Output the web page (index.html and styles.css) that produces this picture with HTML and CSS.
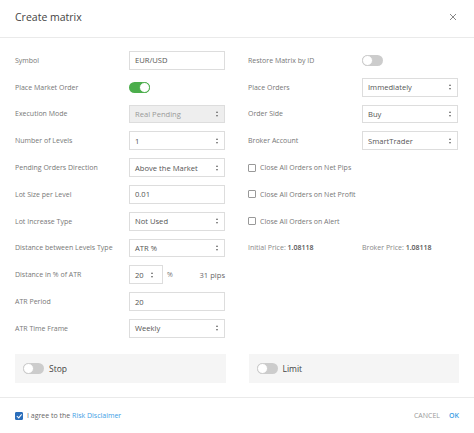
FILE: index.html
```html
<!DOCTYPE html>
<html lang="en">
<head>
    <meta charset="UTF-8">
    <title>Create matrix</title>
    <link rel="stylesheet" href="styles.css">
</head>
<body>

    <div class="dialog">
        <div class="dialog-header">
            <span class="dialog-title">Create matrix</span>
            <svg class="close-icon" width="8" height="8" viewBox="0 0 8 8"><path d="M1 1L7 7M7 1L1 7" stroke="#888" stroke-width="1"/></svg>
        </div>

        <div class="dialog-body">
            <div class="column">
                <div class="row">
                    <span class="label">Symbol</span>
                    <div class="field">EUR/USD</div>
                </div>
                <div class="row">
                    <span class="label">Place Market Order</span>
                    <span class="toggle on"></span>
                </div>
                <div class="row">
                    <span class="label">Execution Mode</span>
                    <div class="field select disabled">Real Pending<span class="arrows"></span></div>
                </div>
                <div class="row">
                    <span class="label">Number of Levels</span>
                    <div class="field select">1<span class="arrows"></span></div>
                </div>
                <div class="row">
                    <span class="label">Pending Orders Direction</span>
                    <div class="field select">Above the Market<span class="arrows"></span></div>
                </div>
                <div class="row">
                    <span class="label">Lot Size per Level</span>
                    <div class="field">0.01</div>
                </div>
                <div class="row">
                    <span class="label">Lot Increase Type</span>
                    <div class="field select">Not Used<span class="arrows"></span></div>
                </div>
                <div class="row">
                    <span class="label">Distance between Levels Type</span>
                    <div class="field select">ATR %<span class="arrows"></span></div>
                </div>
                <div class="row">
                    <span class="label">Distance in % of ATR</span>
                    <div class="field-group">
                        <div class="field number">20<span class="arrows"></span></div>
                        <span class="unit">%</span>
                        <span class="pips">31 pips</span>
                    </div>
                </div>
                <div class="row">
                    <span class="label">ATR Period</span>
                    <div class="field">20</div>
                </div>
                <div class="row">
                    <span class="label">ATR Time Frame</span>
                    <div class="field select">Weekly<span class="arrows"></span></div>
                </div>
            </div>

            <div class="column">
                <div class="row">
                    <span class="label">Restore Matrix by ID</span>
                    <span class="toggle"></span>
                </div>
                <div class="row">
                    <span class="label">Place Orders</span>
                    <div class="field select">Immediately<span class="arrows"></span></div>
                </div>
                <div class="row">
                    <span class="label">Order Side</span>
                    <div class="field select">Buy<span class="arrows"></span></div>
                </div>
                <div class="row">
                    <span class="label">Broker Account</span>
                    <div class="field select">SmartTrader<span class="arrows"></span></div>
                </div>
                <div class="row">
                    <label class="check"><span class="box"></span>Close All Orders on Net Pips</label>
                </div>
                <div class="row">
                    <label class="check"><span class="box"></span>Close All Orders on Net Profit</label>
                </div>
                <div class="row">
                    <label class="check"><span class="box"></span>Close All Orders on Alert</label>
                </div>
                <div class="row">
                    <span class="price">Initial Price: <b>1.08118</b></span>
                    <span class="price">Broker Price: <b>1.08118</b></span>
                </div>
            </div>
        </div>

        <div class="panels">
            <div class="panel"><span class="toggle"></span>Stop</div>
            <div class="panel"><span class="toggle"></span>Limit</div>
        </div>

        <div class="dialog-footer">
            <label class="check agree"><span class="box checked"></span>I agree to the&nbsp;<a href="#">Risk Disclaimer</a></label>
            <div class="actions">
                <span class="btn">CANCEL</span>
                <span class="btn primary">OK</span>
            </div>
        </div>
    </div>

</body>
</html>
```

FILE: styles.css
```css
body {
    margin: 0;
    background-color: #fff;
    color: #555;
    font-family: "Open Sans", "Liberation Sans", sans-serif;
}

.dialog {
    width: 474px;
    height: 433px;
}

.dialog-header {
    height: 38px;
    padding: 0 15px;
    display: flex;
    align-items: center;
    justify-content: space-between;
    border-bottom: 1px solid #eaeaea;
    box-sizing: border-box;
}

.dialog-title {
    font-size: 10.5px;
    color: #444;
    margin-top: -4px;
}

.close-icon {
    margin-right: 2px;
    margin-top: -4px;
}

.dialog-body {
    display: grid;
    grid-template-columns: 1fr 1fr;
    column-gap: 23px;
    padding: 13px 15px 0;
}

.column {
    display: flex;
    flex-direction: column;
    gap: 8px;
}

.row {
    height: 18.8px;
    display: flex;
    align-items: center;
}

.label {
    width: 114px;
    flex-shrink: 0;
    font-size: 7px;
    color: #777;
}

.field {
    width: 96px;
    height: 18.8px;
    box-sizing: border-box;
    border: 1px solid #ddd;
    padding: 0 5px;
    font-size: 7.6px;
    color: #555;
    display: flex;
    align-items: center;
    justify-content: space-between;
}

.field.disabled {
    background-color: #eee;
    color: #999;
}

.arrows {
    width: 3px;
    height: 6px;
    position: relative;
}
.arrows::before, .arrows::after {
    content: "";
    position: absolute;
    left: 0;
    border-left: 1.5px solid transparent;
    border-right: 1.5px solid transparent;
}
.arrows::before {
    top: 0;
    border-bottom: 2.5px solid #666;
}
.arrows::after {
    bottom: 0;
    border-top: 2.5px solid #666;
}

.field-group {
    width: 96px;
    display: flex;
    align-items: center;
}

.field.number {
    width: 34px;
    flex-shrink: 0;
    padding-right: 8px;
}

.unit {
    font-size: 7px;
    margin-left: 4px;
    color: #777;
}

.pips {
    margin-left: auto;
    font-size: 7.6px;
    color: #666;
}

.toggle {
    width: 21px;
    height: 11px;
    border-radius: 6px;
    background-color: #ccc;
    position: relative;
    flex-shrink: 0;
}
.toggle::after {
    content: "";
    position: absolute;
    top: 0;
    left: 0;
    width: 11px;
    height: 11px;
    box-sizing: border-box;
    border-radius: 50%;
    background-color: #fff;
    border: 1px solid #ccc;
}
.toggle.on {
    background-color: #4cae4c;
}
.toggle.on::after {
    left: 10px;
    border-color: #4cae4c;
}

.check {
    display: flex;
    align-items: center;
    font-size: 7px;
    color: #777;
}

.box {
    width: 6px;
    height: 6px;
    border: 1px solid #999;
    border-radius: 1px;
    margin-right: 4px;
    position: relative;
}

.box.checked {
    background-color: #2a6ebb;
    border-color: #2a6ebb;
}
.box.checked::after {
    content: "";
    position: absolute;
    left: 1.6px;
    top: 0;
    width: 1.5px;
    height: 3.5px;
    border: solid #fff;
    border-width: 0 1px 1px 0;
    transform: rotate(40deg);
}

.price {
    width: 114px;
    font-size: 7px;
    color: #888;
}
.price b {
    font-weight: 600;
    color: #555;
}

.panels {
    display: grid;
    grid-template-columns: 1fr 1fr;
    column-gap: 23px;
    padding: 16px 15px 0;
}

.panel {
    height: 29px;
    background-color: #f5f5f5;
    display: flex;
    align-items: center;
    padding-left: 8px;
    gap: 5px;
    font-size: 8.5px;
    color: #444;
}

.dialog-footer {
    margin-top: 14px;
    border-top: 1px solid #eaeaea;
    height: 36px;
    padding: 0 15px;
    display: flex;
    align-items: center;
    justify-content: space-between;
}

.agree {
    color: #666;
}

.agree a {
    color: #3d9ee5;
    text-decoration: none;
}

.actions {
    display: flex;
    gap: 9px;
}

.btn {
    font-size: 7px;
    color: #999;
}

.btn.primary {
    color: #3d9ee5;
    font-weight: 600;
}
```
